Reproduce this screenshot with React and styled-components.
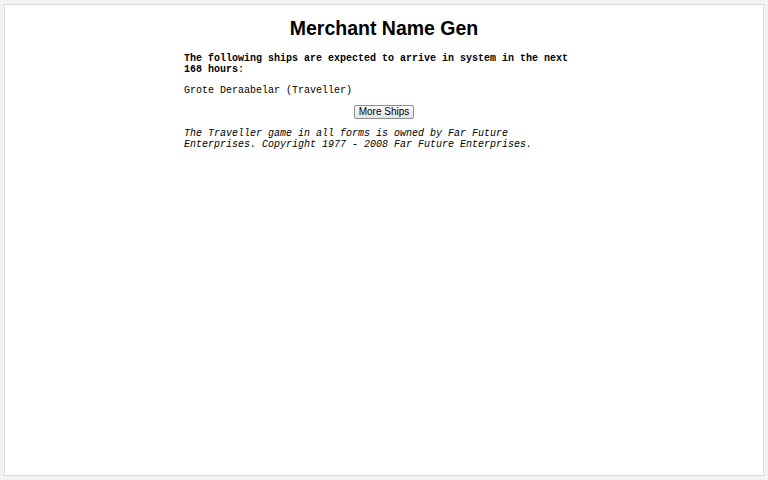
import React from "react";
import styled, { createGlobalStyle } from "styled-components";

const GlobalStyle = createGlobalStyle`
  html, body {
    margin: 0;
    padding: 0;
    background: #f2f2f2;
  }
`;

const App = () => (
  <>
    <GlobalStyle />
    <Page>
      <Title>Merchant Name Gen</Title>
      <Content>
        <Intro>
          <strong>
            The following ships are expected to arrive in system in the next
            168 hours
          </strong>
          :
        </Intro>
        <ShipList>
          <li>Grote Deraabelar (Traveller)</li>
        </ShipList>
        <ButtonRow>
          <MoreButton type="button">More Ships</MoreButton>
        </ButtonRow>
        <Notice>
          The Traveller game in all forms is owned by Far Future Enterprises.
          Copyright 1977 - 2008 Far Future Enterprises.
        </Notice>
      </Content>
    </Page>
  </>
);

export default App;

const Page = styled.div`
  box-sizing: border-box;
  margin: 4px;
  height: 472px;
  background: #fff;
  border: 1px solid #dcdcdc;
  padding-top: 12px;
`;

const Title = styled.h1`
  margin: 0 0 13px;
  text-align: center;
  font-family: "Liberation Sans", Arial, sans-serif;
  font-size: 19.5px;
  font-weight: bold;
  line-height: 23px;
  color: #000;
`;

const Content = styled.div`
  width: 400px;
  margin: 0 auto;
  font-family: "Liberation Mono", "Courier New", monospace;
  font-size: 10px;
  line-height: 11px;
  color: #000;
`;

const Intro = styled.p`
  margin: 0 0 10px;
`;

const ShipList = styled.ul`
  list-style: none;
  margin: 0 0 9px;
  padding: 0;
`;

const ButtonRow = styled.div`
  display: flex;
  justify-content: center;
  margin-bottom: 9px;
`;

const MoreButton = styled.button`
  font-family: "Liberation Sans", Arial, sans-serif;
  font-size: 10px;
  line-height: 12px;
  padding: 0 4px;
  color: #000;
  background: linear-gradient(#fbfbfb, #e3e3e3);
  border: 1px solid #8f8f8f;
  border-radius: 2px;
`;

const Notice = styled.p`
  margin: 0;
  font-style: italic;
`;
